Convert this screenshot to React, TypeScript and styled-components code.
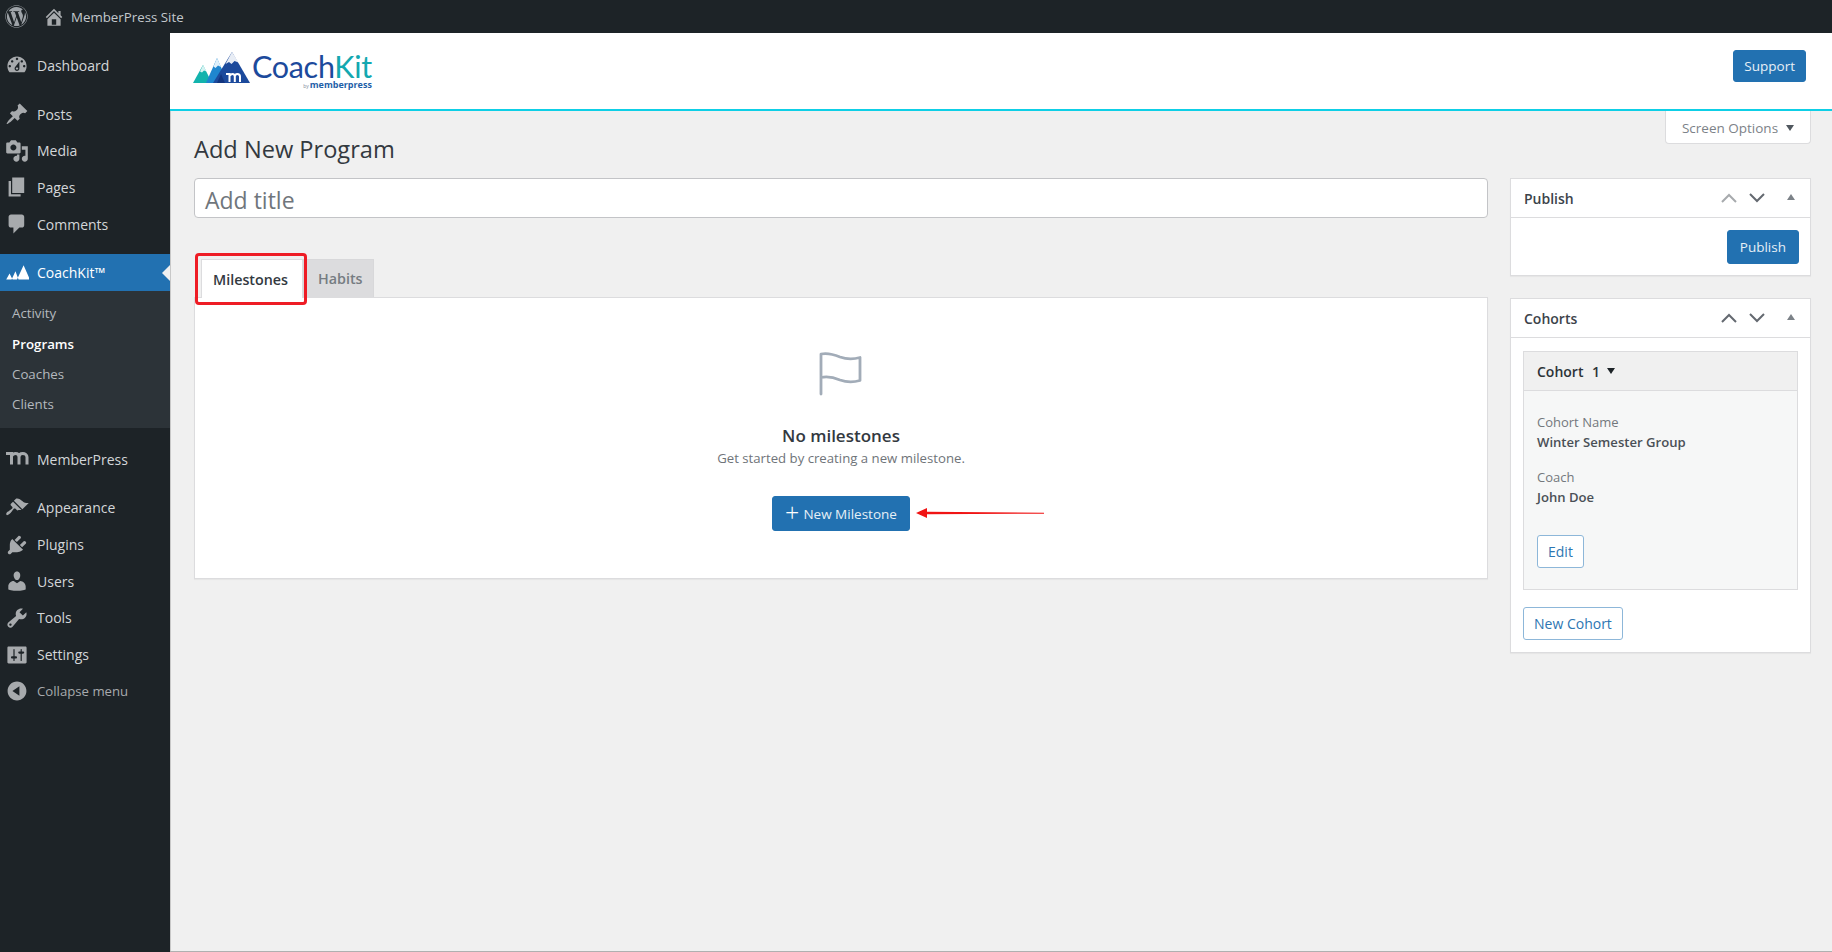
import React from "react";
import styled, { createGlobalStyle } from "styled-components";
import { FaWordpress } from "react-icons/fa";

const icons: Record<string, string> = {
  dashboard:
    "M3.76 16h12.48c1.1-1.37 1.76-3.11 1.76-5 0-4.42-3.58-8-8-8s-8 3.58-8 8c0 1.89.66 3.63 1.76 5zM10 4c.55 0 1 .45 1 1s-.45 1-1 1-1-.45-1-1 .45-1 1-1zM6 6c.55 0 1 .45 1 1s-.45 1-1 1-1-.45-1-1 .45-1 1-1zm8 0c.55 0 1 .45 1 1s-.45 1-1 1-1-.45-1-1 .45-1 1-1zm-5.37 5.55L12 7v6c0 1.1-.9 2-2 2s-2-.9-2-2c0-.57.24-1.08.63-1.45zM4 10c.55 0 1 .45 1 1s-.45 1-1 1-1-.45-1-1 .45-1 1-1zm12 0c.55 0 1 .45 1 1s-.45 1-1 1-1-.45-1-1 .45-1 1-1zm-5 3c0-.55-.45-1-1-1s-1 .45-1 1 .45 1 1 1 1-.45 1-1z",
  posts:
    "M10.44 3.02l1.82-1.82 6.36 6.35-1.83 1.82c-1.05-.68-2.48-.57-3.41.36l-.75.75c-.92.93-1.04 2.35-.35 3.41l-1.83 1.82-2.41-2.41-2.8 2.79c-.42.42-3.38 2.71-3.8 2.29s1.86-3.39 2.28-3.81l2.79-2.79L4.1 9.36l1.83-1.82c1.05.69 2.48.57 3.4-.36l.75-.75c.93-.92 1.05-2.35.36-3.41z",
  media:
    "M13 11V4c0-.55-.45-1-1-1h-1.67L9 1H5L3.67 3H2c-.55 0-1 .45-1 1v7c0 .55.45 1 1 1h10c.55 0 1-.45 1-1zM7 4.5c1.38 0 2.5 1.12 2.5 2.5S8.38 9.5 7 9.5 4.5 8.38 4.5 7 5.62 4.5 7 4.5zM14 6h5v10.5c0 1.38-1.12 2.5-2.5 2.5S14 17.88 14 16.5s1.12-2.5 2.5-2.5c.17 0 .34.02.5.05V9h-3V6zm-4 8.05V13h2v3.5c0 1.38-1.12 2.5-2.5 2.5S7 17.88 7 16.5 8.12 14 9.5 14c.17 0 .34.02.5.05z",
  pages: "M6 15V2h10v13H6zm-1 1h8v2H3V5h2v11z",
  comments:
    "M5 2h9c1.1 0 2 .9 2 2v7c0 1.1-.9 2-2 2h-2l-5 5v-5H5c-1.1 0-2-.9-2-2V4c0-1.1.9-2 2-2z",
  appearance:
    "M14.48 11.06L7.41 3.99l1.5-1.5c.5-.56 2.3-.47 3.51.32 1.21.8 1.43 1.28 2.91 2.1 1.18.64 2.45 1.26 4.45.85zm-.71.71L6.7 4.7 4.93 6.47c-.39.39-.39 1.02 0 1.41l1.06 1.06c.39.39.39 1.03 0 1.42-.6.6-1.43 1.11-2.21 1.69-.35.26-.7.53-1.01.84C1.43 13.23.4 14.87 1.42 15.9c.38.38 2.02-.65 3.4-2.03.31-.31.58-.66.84-1.01.58-.78 1.09-1.61 1.69-2.21.39-.39 1.03-.39 1.42 0l1.06 1.06c.39.39 1.02.39 1.41 0z",
  plugins:
    "M13.11 4.36L9.87 7.6 8 5.73l3.24-3.24c.35-.34 1.05-.2 1.56.32.52.51.66 1.21.31 1.55zm-8 1.77l.91-1.12 9.01 9.01-1.19.84c-.71.71-2.63 1.16-3.82 1.16H6.14L4.9 17.26c-.59.59-1.54.59-2.12 0-.59-.58-.59-1.53 0-2.12l1.24-1.24v-3.88c0-1.13.4-3.19 1.09-3.89zm7.26 3.97l3.24-3.24c.34-.35 1.04-.21 1.55.31.52.51.66 1.21.31 1.55l-3.24 3.25z",
  users:
    "M10 9.25c-2.27 0-2.73-3.44-2.73-3.44C7 4.02 7.82 2 9.97 2c2.16 0 2.98 2.02 2.71 3.81 0 0-.41 3.44-2.68 3.44zm0 2.57L12.72 10c2.39 0 4.52 2.33 4.52 4.53v2.49s-3.65 1.13-7.24 1.13c-3.65 0-7.24-1.13-7.24-1.13v-2.49c0-2.25 1.94-4.48 4.47-4.48z",
  tools:
    "M16.68 9.77c-1.34 1.34-3.3 1.67-4.95.99l-5.41 6.52c-.99.99-2.59.99-3.58 0s-.99-2.59 0-3.57l6.52-5.42c-.68-1.65-.35-3.61.99-4.95 1.28-1.28 3.12-1.62 4.72-1.06l-2.89 2.89 2.82 2.82 2.86-2.87c.53 1.58.18 3.39-1.08 4.65zM3.81 16.21c.4.39 1.04.39 1.43 0 .4-.4.4-1.04 0-1.43-.39-.4-1.03-.4-1.43 0-.39.39-.39 1.03 0 1.43z",
  settings:
    "M18 16V4c0-.55-.45-1-1-1H3c-.55 0-1 .45-1 1v12c0 .55.45 1 1 1h14c.55 0 1-.45 1-1zM8 11h1c.55 0 1 .45 1 1s-.45 1-1 1H8v1.5c0 .28-.22.5-.5.5s-.5-.22-.5-.5V13H6c-.55 0-1-.45-1-1s.45-1 1-1h1V5.5c0-.28.22-.5.5-.5s.5.22.5.5V11zm5-2h-1c-.55 0-1-.45-1-1s.45-1 1-1h1V5.5c0-.28.22-.5.5-.5s.5.22.5.5V7h1c.55 0 1 .45 1 1s-.45 1-1 1h-1v5.5c0 .28-.22.5-.5.5s-.5-.22-.5-.5V9z",
  collapse:
    "M10 2.16c4.33 0 7.84 3.51 7.84 7.84s-3.51 7.84-7.84 7.84S2.16 14.33 2.16 10 5.71 2.16 10 2.16zm2 11.72V6.12L6.18 9.97z",
  home: "M16 8.5l1.53 1.53-1.06 1.06L10 4.62l-6.47 6.47-1.06-1.06L10 2.5l4 4v-2h2v4zm-6-2.46l6 5.99V18H4v-5.97zM12 17v-5H8v5h4z",
  coachkit: "M1 15.500l2.800-5L6.300 15.500zM5.500 15.500l3.200-7L11.300 15.500zM10 15.500L15.500 3.600l5.300 11.900z",
};

const Dash: React.FC<{ name: string; size?: number }> = ({ name, size = 24 }) => (
  <svg width={size} height={size} viewBox="0 0 20 20" fill="currentColor">
    <path fillRule="evenodd" d={icons[name]} />
  </svg>
);

const MemberPressIcon = () => (
  <svg width="24" height="24" viewBox="0 0 24 24" fill="none" stroke="currentColor" strokeWidth="3">
    <path d="M1 5.500h5.500v11M6.500 8c1-1.800 2.500-2.500 4-2.500 2 0 3.500 1.200 3.500 3.500v7.500M14 9c0-2.300 1.800-3.500 3.800-3.500S22 6.700 22 9v7.500" />
  </svg>
);

const CoachKitLogo = () => (
  <svg width="58" height="34" viewBox="0 0 58 34">
    <path d="M0 33L10 15l9 18z" fill="#12b3ad" />
    <path d="M10 15l3.500 6.500-2.500-1-2 2-2-1z" fill="#d6f3f2" />
    <path d="M13 33L24 8l11 25z" fill="#1f86cf" />
    <path d="M24 8l4 9-3-1.500-2.500 2.500-2-1.500z" fill="#dff0fb" />
    <path d="M20 33L39 2l18 31z" fill="#1c4a9c" />
    <path d="M39 2l6.500 10.500-4-1.500-3 3-2.500-2-3.500 2z" fill="#ffffff" opacity="0.9" />
    <path d="M24 33l4-9 4 9z" fill="#12357f" />
    <path
      d="M33 24h3.500v8M36.500 26c.8-1.300 1.700-2 3-2 1.500 0 2.300.9 2.300 2.500V32M41.800 26.500c0-1.600 1.200-2.500 2.600-2.500s2.600.9 2.600 2.500V32"
      fill="none"
      stroke="#ffffff"
      strokeWidth="2"
    />
  </svg>
);

const Chevron: React.FC<{ up?: boolean; dim?: boolean }> = ({ up, dim }) => (
  <svg width="16" height="10" viewBox="0 0 16 10" fill="none" stroke={dim ? "#a7aaad" : "#646970"} strokeWidth="2">
    <path d={up ? "M1 9l7-7 7 7" : "M1 1l7 7 7-7"} />
  </svg>
);

const ArrowAnnotation = () => (
  <svg width="130" height="12" viewBox="0 0 130 12">
    <path d="M0 6L11 1v3.800L128 5.700v1L11 7.300V11z" fill="#f01414" />
  </svg>
);

const FlagIcon = () => (
  <svg width="46" height="44" viewBox="0 0 46 44" fill="none" stroke="#a2acb8" strokeWidth="2.800" strokeLinecap="round" strokeLinejoin="round">
    <path d="M3 42V2c7-1.500 13 .5 19 3 7 2.500 13 2.500 20 .5v23c-7 2-13 2-20-.5-6-2.500-12-4-19-2.500" />
  </svg>
);

const GlobalStyle = createGlobalStyle`
  html, body {
    margin: 0;
    padding: 0;
    background: #f0f0f0;
    font-family: "Open Sans", "Liberation Sans", sans-serif;
    color: #3c434a;
  }
  * {
    box-sizing: border-box;
  }
`;

const Page = styled.div`
  width: 1832px;
  height: 952px;
  display: flex;
  flex-direction: column;
  overflow: hidden;
`;

const AdminBar = styled.div`
  height: 33px;
  flex: none;
  background: #1d2327;
  color: #c3c8cd;
  display: flex;
  align-items: center;
  padding-left: 5px;
  font-size: 13.300px;
`;

const BarLogo = styled.span`
  display: flex;
  color: #9ea3a8;
  font-size: 23px;
  margin-right: 15px;
`;

const BarHome = styled.span`
  display: flex;
  color: #a7aaad;
  margin-right: 6px;
`;

const Body = styled.div`
  flex: 1;
  display: flex;
  min-height: 0;
`;

const Sidebar = styled.nav`
  width: 170px;
  flex: none;
  background: #1d2327;
  padding-top: 14px;
`;

const MenuItem = styled.div<{ $active?: boolean; $gap?: number; $dim?: boolean }>`
  position: relative;
  height: 36.7px;
  margin-top: ${({ $gap }) => $gap ?? 0}px;
  display: flex;
  align-items: center;
  gap: 8px;
  padding-left: 5px;
  font-size: ${({ $dim }) => ($dim ? 13.2 : 14)}px;
  background: ${({ $active }) => ($active ? "#2271b1" : "transparent")};
  color: ${({ $active, $dim }) => ($active ? "#ffffff" : $dim ? "#a7aaad" : "#d3d6d9")};
  > svg {
    flex: none;
    color: ${({ $active }) => ($active ? "#ffffff" : "#a7aaad")};
  }
  ${({ $active }) =>
    $active &&
    `&::after {
      content: "";
      position: absolute;
      right: 0;
      top: 50%;
      margin-top: -8px;
      border: 8px solid transparent;
      border-right-color: #f0f0f0;
      border-left-width: 0;
    }`}
`;

const SubMenu = styled.div`
  background: #2c3338;
  padding: 7px 0 9px 12px;
`;

const SubItem = styled.div<{ $current?: boolean }>`
  height: 30.3px;
  display: flex;
  align-items: center;
  font-size: 13.300px;
  font-weight: ${({ $current }) => ($current ? 600 : 400)};
  color: ${({ $current }) => ($current ? "#ffffff" : "#b4b9be")};
`;

const Main = styled.main`
  flex: 1;
  min-width: 0;
  display: flex;
  flex-direction: column;
  border-bottom: 1px solid #b0b0b0;
`;

const Header = styled.header`
  height: 77.500px;
  flex: none;
  background: #ffffff;
  border-bottom: 2.500px solid #0ecfe6;
  display: flex;
  align-items: flex-start;
  justify-content: space-between;
  padding: 17px 26px 0 23px;
`;

const Logo = styled.div`
  display: flex;
  align-items: flex-start;
  gap: 1px;
`;

const LogoText = styled.div`
  display: flex;
  flex-direction: column;
  align-items: flex-end;
  padding-top: 3px;
`;

const LogoWord = styled.div`
  font-family: Lato, "Open Sans", sans-serif;
  font-size: 30.500px;
  line-height: 27px;
  letter-spacing: -0.300px;
  color: #1c4a9c;
  > span {
    color: #13a8b0;
  }
`;

const LogoBy = styled.div`
  font-size: 9px;
  line-height: 9px;
  font-weight: 700;
  color: #1f5fa8;
  > small {
    font-size: 5px;
    font-weight: 400;
    color: #7d8a99;
    margin-right: 1px;
  }
`;

const SolidButton = styled.button<{ $h?: number; $px?: number }>`
  height: ${({ $h }) => $h ?? 34}px;
  padding: 0 ${({ $px }) => $px ?? 11}px;
  background: #2271b1;
  color: #e6eff6;
  border: 1px solid #2271b1;
  border-radius: 3px;
  font: 400 13.500px "Open Sans", sans-serif;
  display: inline-flex;
  align-items: center;
  gap: 4px;
`;

const OutlineButton = styled.button`
  background: #ffffff;
  color: #2d76b2;
  border: 1px solid #8db7d9;
  border-radius: 3px;
  padding: 0 10px;
  height: 33px;
  font: 400 14px "Open Sans", sans-serif;
  align-self: flex-start;
`;

const Content = styled.div`
  flex: 1;
  display: grid;
  grid-template-columns: 1294px 301px;
  column-gap: 22px;
  padding-left: 23px;
  align-content: start;
  border-left: 1px solid #c8c8c8;
`;

const TopRow = styled.div`
  grid-column: 1 / -1;
  height: 67.500px;
  display: flex;
  justify-content: space-between;
  align-items: flex-start;
`;

const Title = styled.h1`
  margin: 21.500px 0 0;
  font-size: 23.600px;
  line-height: 34px;
  font-weight: 400;
  color: #33393f;
`;

const ScreenOptions = styled.div`
  height: 33px;
  width: 146px;
  padding-top: 2px;
  background: #ffffff;
  border: 1px solid #dcdcde;
  border-top: 0;
  border-radius: 0 0 4px 4px;
  font-size: 13.500px;
  color: #7c8288;
  display: flex;
  align-items: center;
  justify-content: center;
  gap: 8px;
`;

const Caret = styled.span`
  width: 0;
  height: 0;
  border-left: 4.500px solid transparent;
  border-right: 4.500px solid transparent;
  border-top: 6px solid ${({ color }) => color || "#50575e"};
`;

const UpCaret = styled.span`
  width: 0;
  height: 0;
  border-left: 4.500px solid transparent;
  border-right: 4.500px solid transparent;
  border-bottom: 6px solid #7c8288;
  margin: 0 2px 2px 22px;
`;

const EditorColumn = styled.div`
  display: flex;
  flex-direction: column;
`;

const TitleInput = styled.div`
  height: 40px;
  background: #ffffff;
  border: 1px solid #c3c4c7;
  border-radius: 4px;
  padding: 3px 0 0 10px;
  display: flex;
  align-items: center;
  font-size: 23px;
  color: #70767c;
`;

const Tabs = styled.div`
  position: relative;
  display: flex;
  align-items: flex-end;
  height: 41px;
  margin-top: 38px;
  padding-left: 7px;
`;

const Tab = styled.div<{ $active?: boolean }>`
  height: ${({ $active }) => ($active ? 39 : 38)}px;
  margin-bottom: ${({ $active }) => ($active ? -1 : 0)}px;
  padding: ${({ $active }) => ($active ? "0 14px 0 11px" : "0 10px 0 14px")};
  display: flex;
  align-items: center;
  font-size: 14.300px;
  font-weight: 600;
  background: ${({ $active }) => ($active ? "#ffffff" : "#dcdcde")};
  color: ${({ $active }) => ($active ? "#33393f" : "#767c82")};
  border: 1px solid ${({ $active }) => ($active ? "#dcdcde" : "#d8d8da")};
  border-bottom: 0;
  position: relative;
  z-index: ${({ $active }) => ($active ? 1 : 0)};
`;

const RedBox = styled.div`
  position: absolute;
  left: 1px;
  top: -3px;
  width: 112px;
  height: 52px;
  border: 3px solid #ee1c25;
  border-radius: 4px;
  z-index: 2;
  pointer-events: none;
`;

const TabPanel = styled.div`
  height: 282px;
  background: #ffffff;
  border: 1px solid #dcdcde;
  box-shadow: 0 1px 1px rgba(0, 0, 0, 0.04);
  display: flex;
  flex-direction: column;
  align-items: center;
  padding-top: 54px;
`;

const EmptyTitle = styled.div`
  margin-top: 28px;
  font-size: 17px;
  line-height: 24px;
  font-weight: 600;
  color: #33393f;
`;

const EmptyText = styled.div`
  font-size: 13.200px;
  line-height: 20px;
  color: #6f7479;
`;

const ButtonWrap = styled.div`
  position: relative;
  margin-top: 28px;
`;

const ArrowSpot = styled.div`
  position: absolute;
  left: 144px;
  top: 11px;
  display: flex;
`;

const PlusIcon = styled.span`
  font-size: 25px;
  line-height: 20px;
  font-weight: 300;
  margin-top: -3px;
  color: #ffffff;
`;

const SideColumn = styled.aside`
  display: flex;
  flex-direction: column;
  gap: 22px;
`;

const MetaBox = styled.section`
  background: #ffffff;
  border: 1px solid #dcdcde;
  box-shadow: 0 1px 1px rgba(0, 0, 0, 0.04);
`;

const MetaHead = styled.div`
  height: 39px;
  border-bottom: 1px solid #dcdcde;
  display: flex;
  align-items: center;
  padding: 0 13px;
  font-size: 14px;
  font-weight: 600;
  color: #3c434a;
  > b {
    flex: 1;
    font-weight: 600;
  }
  > svg + svg {
    margin-left: 12px;
  }
`;

const PublishRow = styled.div`
  height: 57px;
  display: flex;
  justify-content: flex-end;
  align-items: flex-start;
  padding: 12px 11px 0;
`;

const CohortBody = styled.div`
  padding: 13px 12px 12px;
  display: flex;
  flex-direction: column;
  gap: 17px;
`;

const CohortCard = styled.div`
  background: #f6f7f7;
  border: 1px solid #dcdcde;
`;

const CohortHead = styled.div`
  height: 39px;
  background: #f0f0f0;
  border-bottom: 1px solid #dcdcde;
  padding-left: 13px;
  display: flex;
  align-items: center;
  gap: 7px;
  font-size: 14px;
  font-weight: 600;
  color: #2c3338;
  word-spacing: 5px;
`;

const CohortFields = styled.div`
  padding: 21px 13px 21px;
  display: flex;
  flex-direction: column;
`;

const FieldLabel = styled.div`
  font-size: 13px;
  line-height: 20px;
  color: #73787d;
`;

const FieldValue = styled.div`
  font-size: 13.100px;
  line-height: 20px;
  font-weight: 600;
  color: #4a5056;
  margin-bottom: 15px;
`;

const EditButton = styled(OutlineButton)`
  margin-top: 13px;
`;

const sideTop = [
  { name: "posts", label: "Posts", gap: 12 },
  { name: "media", label: "Media" },
  { name: "pages", label: "Pages" },
  { name: "comments", label: "Comments" },
];

const sideBottom = [
  { name: "appearance", label: "Appearance", gap: 11.5 },
  { name: "plugins", label: "Plugins" },
  { name: "users", label: "Users" },
  { name: "tools", label: "Tools" },
  { name: "settings", label: "Settings" },
];

const subItems = ["Activity", "Programs", "Coaches", "Clients"];

const App: React.FC = () => {
  return (
    <Page>
      <GlobalStyle />
      <AdminBar>
        <BarLogo>
          <FaWordpress />
        </BarLogo>
        <BarHome>
          <Dash name="home" size={22} />
        </BarHome>
        MemberPress Site
      </AdminBar>
      <Body>
        <Sidebar>
          <MenuItem>
            <Dash name="dashboard" />
            Dashboard
          </MenuItem>
          {sideTop.map((item) => (
            <MenuItem key={item.name} $gap={item.gap}>
              <Dash name={item.name} />
              {item.label}
            </MenuItem>
          ))}
          <MenuItem $active $gap={12}>
            <Dash name="coachkit" />
            CoachKit™
          </MenuItem>
          <SubMenu>
            {subItems.map((item) => (
              <SubItem key={item} $current={item === "Programs"}>
                {item}
              </SubItem>
            ))}
          </SubMenu>
          <MenuItem $gap={13}>
            <MemberPressIcon />
            MemberPress
          </MenuItem>
          {sideBottom.map((item) => (
            <MenuItem key={item.name} $gap={item.gap}>
              <Dash name={item.name} />
              {item.label}
            </MenuItem>
          ))}
          <MenuItem $dim>
            <Dash name="collapse" />
            Collapse menu
          </MenuItem>
        </Sidebar>
        <Main>
          <Header>
            <Logo>
              <CoachKitLogo />
              <LogoText>
                <LogoWord>
                  Coach<span>Kit</span>
                </LogoWord>
                <LogoBy>
                  <small>by</small>memberpress
                </LogoBy>
              </LogoText>
            </Logo>
            <SolidButton $h={32} $px={10}>
              Support
            </SolidButton>
          </Header>
          <Content>
            <TopRow>
              <Title>Add New Program</Title>
              <ScreenOptions>
                Screen Options <Caret />
              </ScreenOptions>
            </TopRow>
            <EditorColumn>
              <TitleInput>Add title</TitleInput>
              <Tabs>
                <RedBox />
                <Tab $active>Milestones</Tab>
                <Tab>Habits</Tab>
              </Tabs>
              <TabPanel>
                <FlagIcon />
                <EmptyTitle>No milestones</EmptyTitle>
                <EmptyText>Get started by creating a new milestone.</EmptyText>
                <ButtonWrap>
                  <SolidButton $h={35} $px={12}>
                    <PlusIcon>+</PlusIcon> New Milestone
                  </SolidButton>
                  <ArrowSpot>
                    <ArrowAnnotation />
                  </ArrowSpot>
                </ButtonWrap>
              </TabPanel>
            </EditorColumn>
            <SideColumn>
              <MetaBox>
                <MetaHead>
                  <b>Publish</b>
                  <Chevron up dim />
                  <Chevron />
                  <UpCaret />
                </MetaHead>
                <PublishRow>
                  <SolidButton $px={12}>Publish</SolidButton>
                </PublishRow>
              </MetaBox>
              <MetaBox>
                <MetaHead>
                  <b>Cohorts</b>
                  <Chevron up />
                  <Chevron />
                  <UpCaret />
                </MetaHead>
                <CohortBody>
                  <CohortCard>
                    <CohortHead>
                      Cohort 1 <Caret color="#1d2327" />
                    </CohortHead>
                    <CohortFields>
                      <FieldLabel>Cohort Name</FieldLabel>
                      <FieldValue>Winter Semester Group</FieldValue>
                      <FieldLabel>Coach</FieldLabel>
                      <FieldValue>John Doe</FieldValue>
                      <EditButton>Edit</EditButton>
                    </CohortFields>
                  </CohortCard>
                  <OutlineButton>New Cohort</OutlineButton>
                </CohortBody>
              </MetaBox>
            </SideColumn>
          </Content>
        </Main>
      </Body>
    </Page>
  );
};

export default App;
